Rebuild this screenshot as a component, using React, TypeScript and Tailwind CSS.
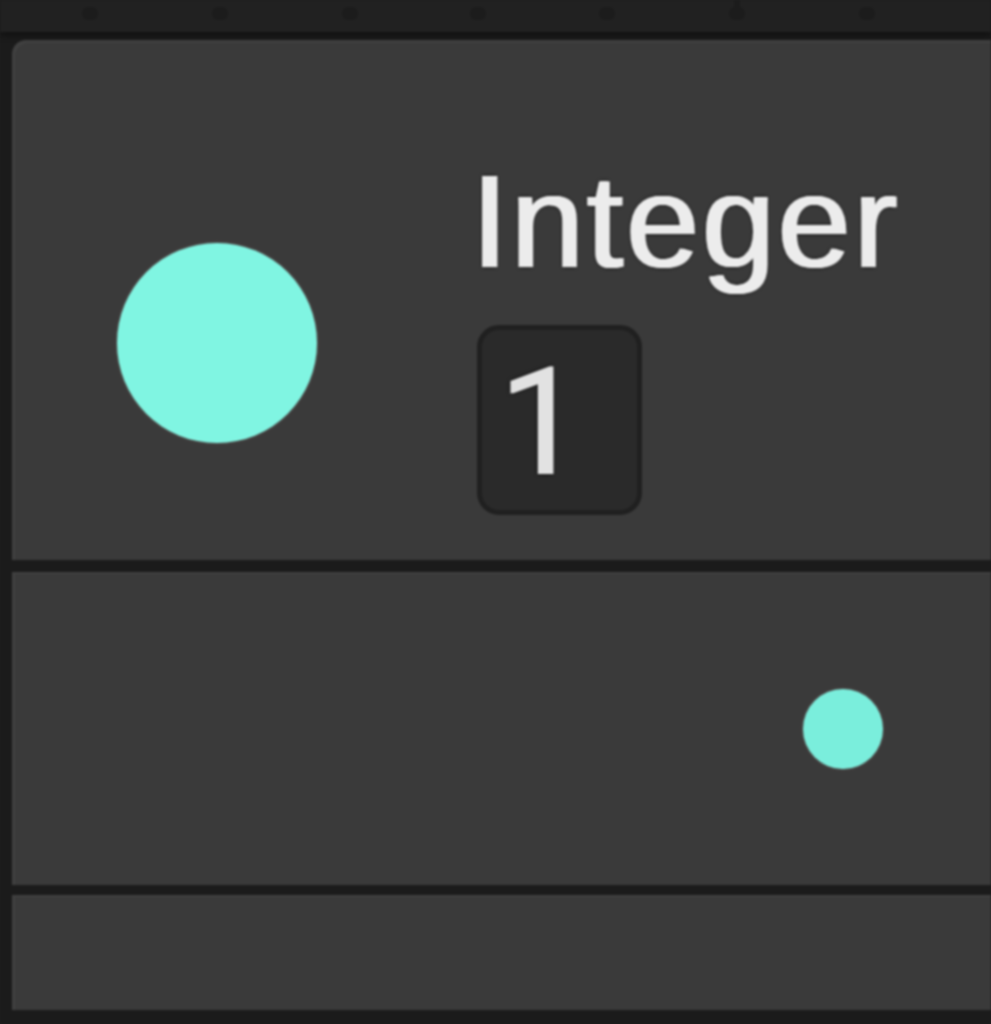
import React from 'react';

const gridDots = [90, 220, 350, 478, 607, 737, 867];

export default function App() {
  return (
    <div className="w-[991px] h-[1024px] overflow-hidden bg-[#1f1f1f]">
      <div
        className="w-[991px] h-[1024px] bg-[#1b1b1b] flex flex-col blur-[1px]"
        style={{ fontFamily: '"Liberation Sans", Arial, sans-serif' }}
      >
        {/* canvas strip above the node */}
        <div className="relative h-[32px] shrink-0 bg-[#212121] shadow-[0_4px_6px_rgba(0,0,0,0.35)]">
          {gridDots.map((x) => (
            <span
              key={x}
              className="absolute top-[7px] w-[16px] h-[13px] -ml-[8px] rounded-full bg-[#1c1c1c]"
              style={{ left: x }}
            />
          ))}
          <span className="absolute left-[734px] top-0 w-[6px] h-[18px] bg-[#1c1c1c]" />
        </div>

        {/* node body */}
        <div className="mt-[8px] ml-[12px] flex-1 flex flex-col gap-[12px] rounded-tl-[14px] overflow-hidden">
          <div className="h-[520px] shrink-0 flex items-start pt-[116px] pl-[105px] bg-[#3a3a3a] rounded-tl-[14px] shadow-[inset_3px_3px_0_#404040]">
            <div className="mt-[87px] w-[200px] h-[200px] rounded-full bg-[#80f5e2] shadow-[0_0_3px_#6b5a5a]" />
            <div className="ml-[154px] flex flex-col">
              <span className="text-[131px] leading-[131px] tracking-[3px] text-[#ececec] [text-shadow:2px_0_0_#ececec,-1px_0_0_#ececec,0_0_4px_rgba(0,0,0,0.6)]">
                Integer
              </span>
              <div className="mt-[38px] ml-[6px] w-[165px] h-[190px] rounded-[22px] border-[5px] border-[#202020] bg-[#2a2a2a] pl-[16px] overflow-hidden">
                <span
                  className="block text-[150px] leading-[190px] -mt-[2px] text-[#e2e2e2] [text-shadow:2px_0_0_#e2e2e2,0_0_4px_rgba(0,0,0,0.6)]"
                  style={{ fontFamily: 'Roboto, "Liberation Sans", sans-serif' }}
                >
                  1
                </span>
              </div>
            </div>
          </div>

          <div className="h-[313px] shrink-0 flex items-start pt-[117px] pl-[791px] bg-[#3a3a3a] shadow-[inset_3px_2px_0_#404040]">
            <div className="w-[80px] h-[80px] rounded-full bg-[#7aeedc] shadow-[0_0_3px_#6b5a5a]" />
          </div>

          <div className="h-[115px] shrink-0 -mt-[2px] bg-[#3a3a3a] shadow-[inset_3px_2px_0_#404040]" />
        </div>
      </div>
    </div>
  );
}
